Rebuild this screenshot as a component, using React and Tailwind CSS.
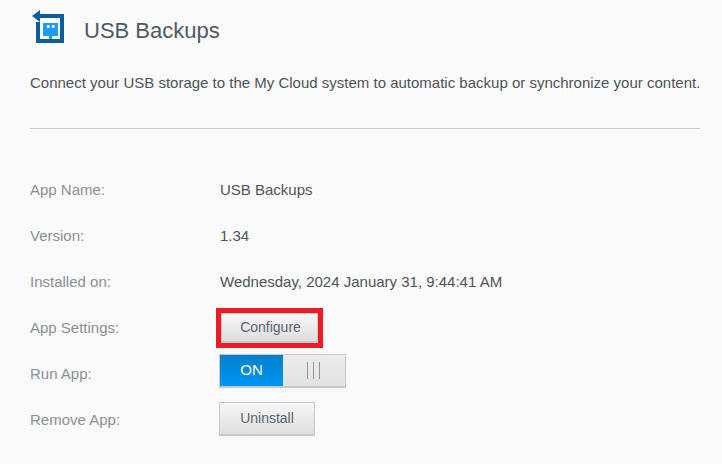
export default function App() {
  const label = "w-[190px] text-[#8a8f94]";
  const btn = "flex items-center justify-center border border-[#c8c8c8] border-b-2 bg-gradient-to-b from-[#f6f6f6] to-[#dedede] text-[#5a6470] text-[14px]";
  return (
    <div className="h-[464px] w-[722px] overflow-hidden bg-[#fafafa] px-[30px] text-[15px] text-[#4d5358]" style={{ fontFamily: '"Liberation Sans", Arial, sans-serif' }}>
      <div className="flex h-[60px] items-center">
        <svg width="36" height="36" viewBox="30 10 36 36" className="mt-[-4px] shrink-0">
          <path d="M38 14h26v29H36V22h4v17h20V18H38z" fill="#0b5d9e" />
          <path d="M32 16 40 10v12z" fill="#0b5d9e" />
          <path d="M43 23h15v13h-6v3h-3v-3h-6z" fill="#1e9bff" />
          <rect x="47" y="25" width="2.5" height="3" fill="#fff" />
          <rect x="52" y="25" width="2.5" height="3" fill="#fff" />
        </svg>
        <h1 className="ml-[18px] text-[22px] font-normal text-[#4f5962]">USB Backups</h1>
      </div>
      <p className="mt-[14px] h-[18px] whitespace-nowrap leading-[18px]">Connect your USB storage to the My Cloud system to automatic backup or synchronize your content.</p>
      <div className="mt-[36px] h-px w-[670px] bg-[#c9c9c9]" />
      <div className="mt-[38px] flex flex-col">
        <div className="flex h-[46px] items-center"><span className={label}>App Name:</span><span>USB Backups</span></div>
        <div className="flex h-[46px] items-center"><span className={label}>Version:</span><span>1.34</span></div>
        <div className="flex h-[47px] items-center"><span className={label}>Installed on:</span><span>Wednesday, 2024 January 31, 9:44:41 AM</span></div>
        <div className="flex h-[44px] items-center">
          <span className={label}>App Settings:</span>
          <div className="ml-[-4px] h-[40px] w-[107px] border-[5px] border-[#ed1c24]">
            <div className={`${btn} h-full w-full pl-[2px]`}>Configure</div>
          </div>
        </div>
        <div className="flex h-[43px] items-center">
          <span className={`${label} pt-[6px]`}>Run App:</span>
          <div className="mb-[2px] ml-[-1px] flex h-[34px] w-[127px] border border-[#c8c8c8] border-b-2">
            <div className="flex w-[63px] items-center justify-center bg-gradient-to-b from-[#0080cc] to-[#0096f5] text-[15px] text-white">ON</div>
            <div className="flex flex-1 items-center justify-center gap-[5px] bg-gradient-to-b from-[#ececec] to-[#e2e2e2] pr-[2px]">
              <span className="h-[17px] w-px bg-[#8f959a]" />
              <span className="h-[17px] w-px bg-[#8f959a]" />
              <span className="h-[17px] w-px bg-[#8f959a]" />
            </div>
          </div>
        </div>
        <div className="flex h-[51px] items-center">
          <span className={`${label} pt-[4px]`}>Remove App:</span>
          <div className={`${btn} ml-[-1px] h-[34px] w-[96px]`}>Uninstall</div>
        </div>
      </div>
    </div>
  );
}
